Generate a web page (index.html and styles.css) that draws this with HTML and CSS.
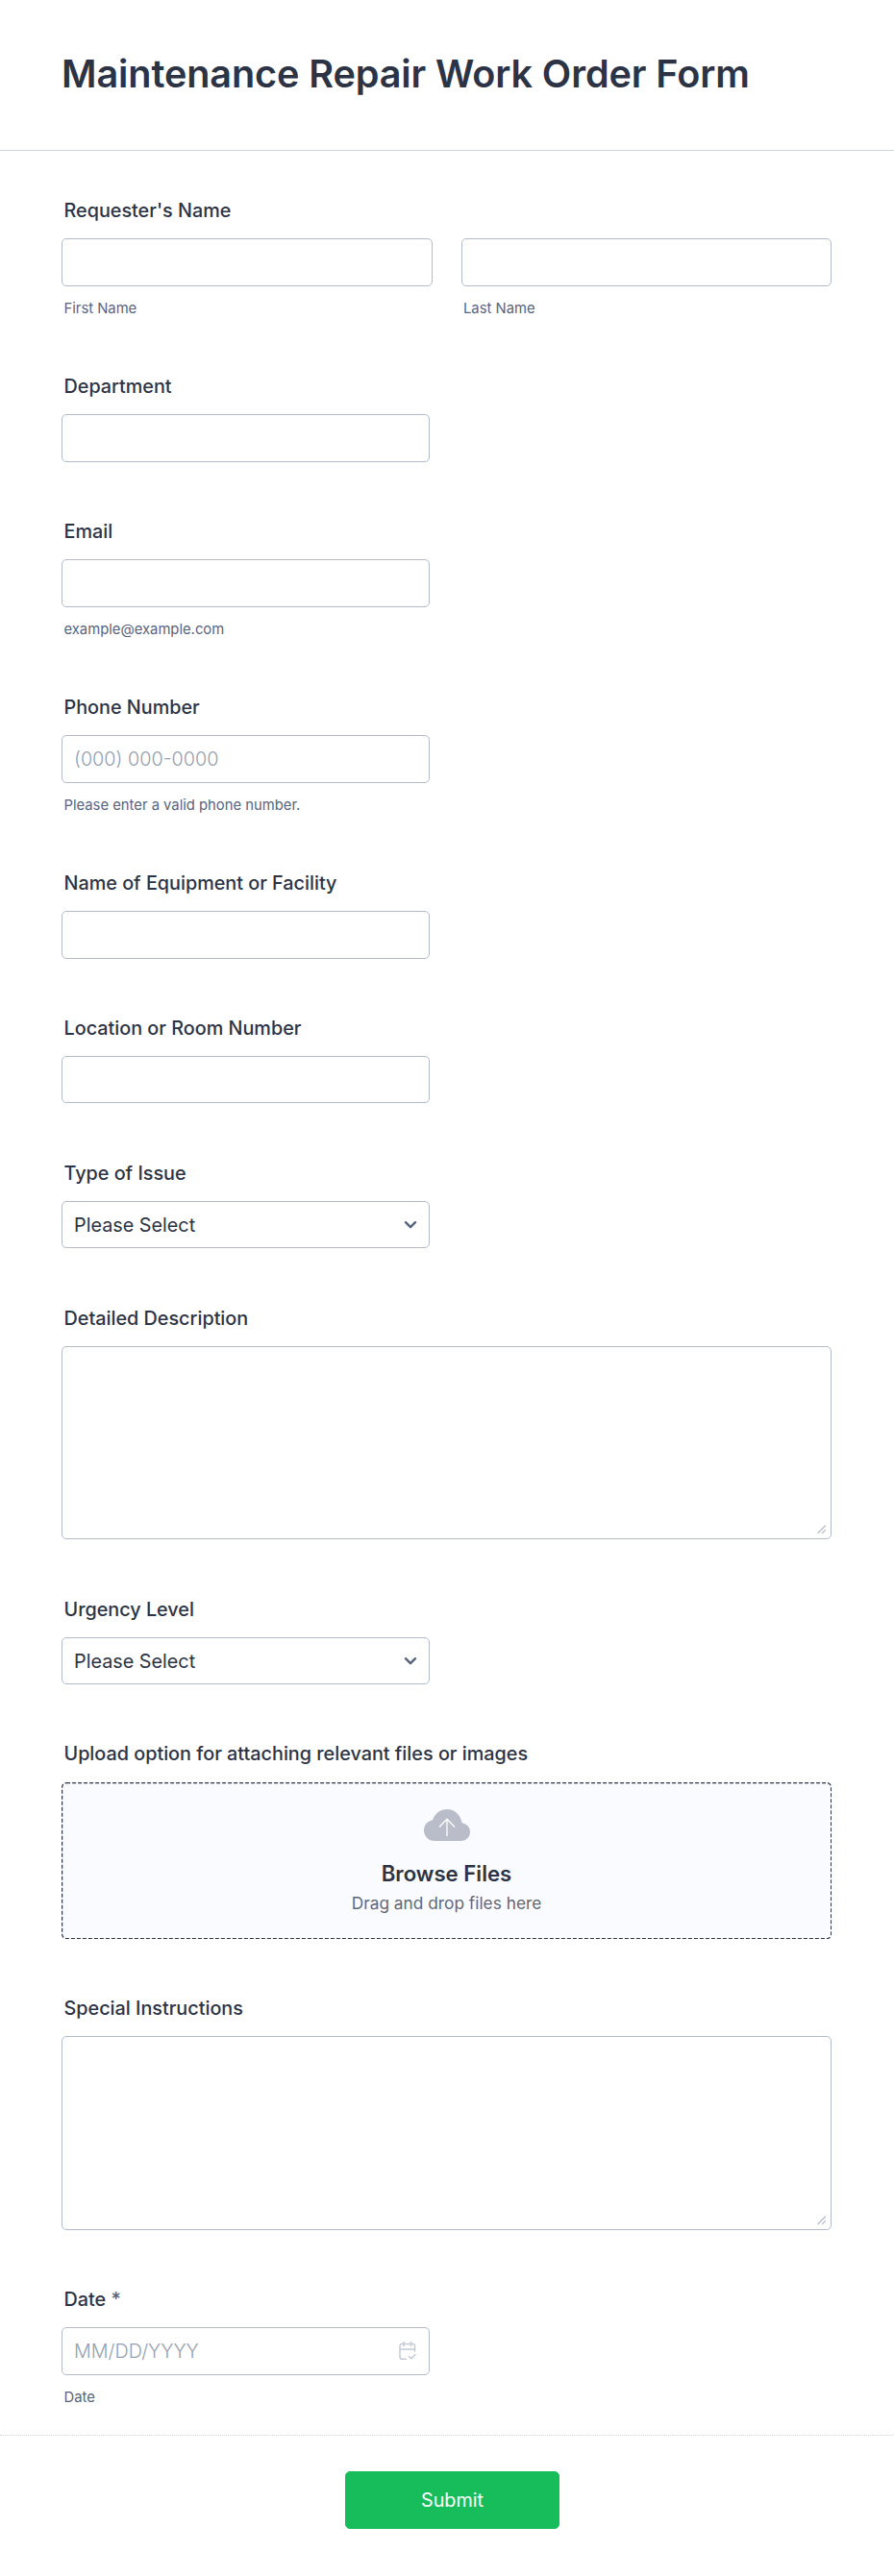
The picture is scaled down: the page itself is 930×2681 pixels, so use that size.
FILE: index.html
```
<!DOCTYPE html>
<html lang="en">
<head>
  <meta charset="utf-8">
  <title>Maintenance Repair Work Order Form</title>
  <link rel="stylesheet" href="styles.css">
</head>
<body>
  <form class="form">
    <header class="form-header">
      <h1>Maintenance Repair Work Order Form</h1>
    </header>

    <div class="form-body">
      <div class="field">
        <label for="firstName">Requester's Name</label>
        <div class="name-row">
          <div class="name-col">
            <input type="text" id="firstName">
            <span class="sub-label">First Name</span>
          </div>
          <div class="name-col">
            <input type="text" id="lastName">
            <span class="sub-label">Last Name</span>
          </div>
        </div>
      </div>

      <div class="field half">
        <label for="department">Department</label>
        <input type="text" id="department">
      </div>

      <div class="field half">
        <label for="email">Email</label>
        <input type="email" id="email">
        <span class="sub-label">example@example.com</span>
      </div>

      <div class="field half">
        <label for="phone">Phone Number</label>
        <input type="tel" id="phone" placeholder="(000) 000-0000">
        <span class="sub-label">Please enter a valid phone number.</span>
      </div>

      <div class="field half">
        <label for="equipment">Name of Equipment or Facility</label>
        <input type="text" id="equipment">
      </div>

      <div class="field half">
        <label for="location">Location or Room Number</label>
        <input type="text" id="location">
      </div>

      <div class="field half">
        <label for="issue">Type of Issue</label>
        <div class="control">
          <select id="issue">
            <option>Please Select</option>
          </select>
          <svg class="chevron" viewBox="0 0 14 10"><path d="M2 2.2 7 7.2 12 2.2"/></svg>
        </div>
      </div>

      <div class="field">
        <label for="description">Detailed Description</label>
        <div class="control">
          <textarea id="description"></textarea>
          <svg class="grip" viewBox="0 0 10 10"><path d="M1 8.5 8.5 1M5.5 8.5 8.5 5.5"/></svg>
        </div>
      </div>

      <div class="field half">
        <label for="urgency">Urgency Level</label>
        <div class="control">
          <select id="urgency">
            <option>Please Select</option>
          </select>
          <svg class="chevron" viewBox="0 0 14 10"><path d="M2 2.2 7 7.2 12 2.2"/></svg>
        </div>
      </div>

      <div class="field">
        <label>Upload option for attaching relevant files or images</label>
        <div class="upload">
          <svg class="upload-border"><rect x="0.6" y="0.6" width="800" height="162" rx="4.5"/></svg>
          <svg class="cloud" viewBox="0 0 48 33">
            <path class="cloud-shape" d="M11 33A11 11 0 0 1 0 22C0 16 4 12 9 11.2C11.5 4.5 17 0 24 0C32 0 38 6 39.7 14.2C44.5 15 48 18.8 48 23.5C48 29 43.7 33 38.5 33Z"/>
            <path class="cloud-arrow" d="M24 28V10.3M16 18.5 24 10.3 32 18.5"/>
          </svg>
          <span class="upload-title">Browse Files</span>
          <span class="upload-text">Drag and drop files here</span>
        </div>
      </div>

      <div class="field">
        <label for="instructions">Special Instructions</label>
        <div class="control">
          <textarea id="instructions"></textarea>
          <svg class="grip" viewBox="0 0 10 10"><path d="M1 8.5 8.5 1M5.5 8.5 8.5 5.5"/></svg>
        </div>
      </div>

      <div class="field half">
        <label for="date">Date <span class="required">*</span></label>
        <div class="control">
          <input type="text" id="date" placeholder="MM/DD/YYYY">
          <svg class="calendar" viewBox="0 0 18 20"><path d="M16.5 10V4.5A2 2 0 0 0 14.5 2.5H3A2 2 0 0 0 1 4.5V16A2.3 2.3 0 0 0 3.3 18.3H7.5M1 8H16.5M5 .5V4.5M12.5 .5V4.5M10.5 15.5 12.8 17.8 17 13.5"/></svg>
        </div>
        <span class="sub-label">Date</span>
      </div>
    </div>

    <footer class="form-footer">
      <button type="button" class="submit">Submit</button>
    </footer>
  </form>
</body>
</html>
```
FILE: styles.css
```
* {
  box-sizing: border-box;
}

body {
  margin: 0;
  background-color: #fff;
  color: #2c3345;
  font-family: Inter, "Liberation Sans", sans-serif;
  font-size: 19.8px;
}

.form-header {
  height: 157px;
  padding: 53px 64px 0;
  border-bottom: 1px solid #cfd5e0;
}

h1 {
  margin: 0;
  font-size: 39.6px;
  line-height: 48px;
  font-weight: 600;
  letter-spacing: -0.1px;
}

.form-body {
  height: 2376.5px;
  padding: 50px 65px 0 64px;
}

.field {
  display: flex;
  flex-direction: column;
  margin-bottom: 60.15px;
}

.half {
  width: 383px;
}

label {
  height: 24px;
  margin: 0 2.5px 17.3px;
  line-height: 24px;
  font-weight: 500;
  white-space: nowrap;
}

.required {
  color: #57647e;
}

input,
select,
textarea {
  display: block;
  width: 100%;
  height: 49.5px;
  padding: 0 12px;
  border: 1px solid #b4bac8;
  border-radius: 5px;
  background-color: #fff;
  color: #2c3345;
  font: inherit;
  appearance: none;
  outline: none;
}

textarea {
  height: 201.5px;
  resize: none;
}

input::placeholder {
  color: #95a0b0;
  font-weight: 300;
  opacity: 1;
}

.name-row {
  display: flex;
  gap: 30px;
}

.name-col {
  flex: 1;
}

.sub-label {
  display: block;
  height: 18px;
  margin: 14px 2.5px 0;
  color: #57647e;
  font-size: 14.8px;
  line-height: 19px;
}

.control {
  position: relative;
}

.control svg {
  position: absolute;
  fill: none;
  stroke-linecap: round;
  stroke-linejoin: round;
}

.chevron {
  top: 20px;
  right: 13px;
  width: 14px;
  height: 10px;
  stroke: #57647e;
  stroke-width: 2.4;
}

.grip {
  right: 5px;
  bottom: 5px;
  width: 10px;
  height: 10px;
  stroke: #b8bdc9;
  stroke-width: 1.3;
}

.calendar {
  top: 15px;
  right: 14px;
  width: 18px;
  height: 20px;
  stroke: #c5cad5;
  stroke-width: 1.5;
}

.upload {
  position: relative;
  display: flex;
  flex-direction: column;
  align-items: center;
  height: 163.2px;
  padding-top: 28px;
  border-radius: 5px;
  background-color: #fafbff;
}

.upload-border {
  position: absolute;
  top: 0;
  left: 0;
  width: 100%;
  height: 100%;
  fill: none;
  stroke: #2c3345;
  stroke-width: 1.2;
  stroke-dasharray: 4 2;
}

.cloud {
  width: 48px;
  height: 33px;
}

.cloud-shape {
  fill: #b8bdc9;
}

.cloud-arrow {
  fill: none;
  stroke: #fff;
  stroke-width: 1.3;
}

.upload-title {
  margin-top: 19px;
  font-size: 22.2px;
  line-height: 30px;
  font-weight: 600;
}

.upload-text {
  color: #5f6878;
  font-size: 17.3px;
  line-height: 24px;
  margin-top: 4px;
}

.form-footer {
  height: 147px;
  padding: 37px 0 0 11px;
  border-top: 1px dotted #cfd5e0;
  text-align: center;
}

.submit {
  width: 223px;
  height: 60px;
  border: 1px solid #18bd5b;
  border-radius: 5px;
  background-color: #18bd5b;
  color: #fff;
  font: inherit;
}
```
